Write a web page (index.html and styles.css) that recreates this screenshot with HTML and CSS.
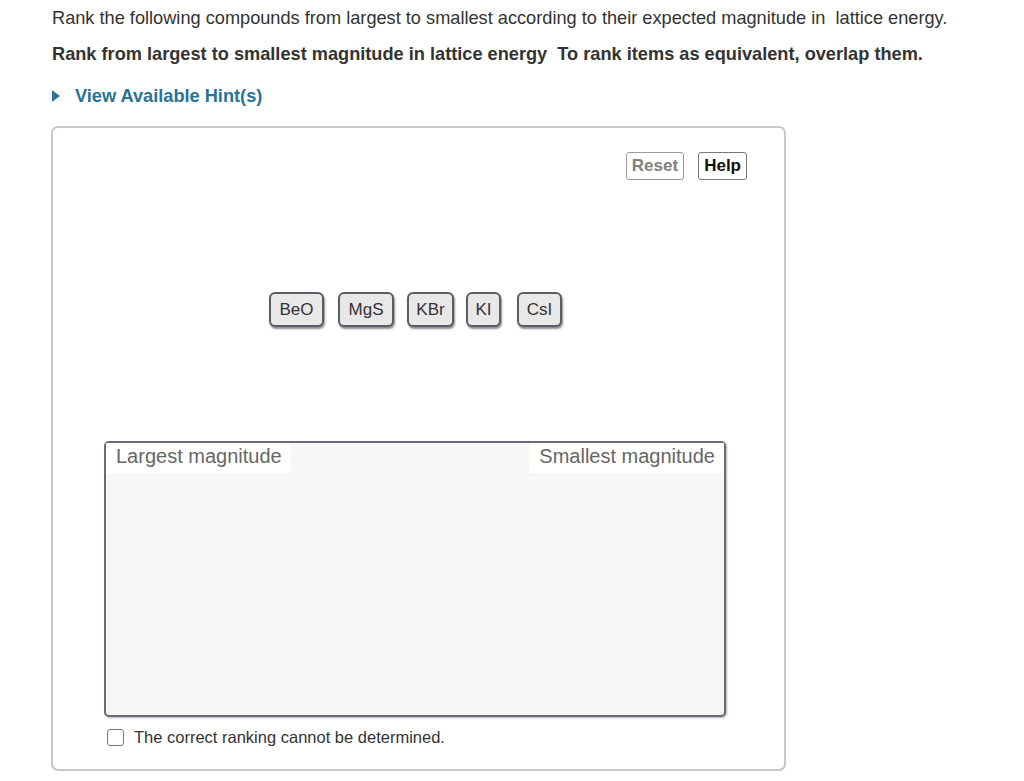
FILE: index.html
```html
<!DOCTYPE html>
<html>
<head>
<meta charset="utf-8">
<link rel="stylesheet" href="styles.css">
</head>
<body>
<div class="page">
  <p class="intro">Rank the following compounds from largest to smallest according to their expected magnitude in &nbsp;lattice energy.</p>
  <p class="instr">Rank from largest to smallest magnitude in lattice energy &nbsp;To rank items as equivalent, overlap them.</p>
  <div class="hint"><span class="tri"></span><span class="hint-text">View Available Hint(s)</span></div>
  <div class="panel">
    <div class="toolbar">
      <button class="btn reset">Reset</button>
      <button class="btn help">Help</button>
    </div>
    <div class="tiles">
      <div class="tile t-beo">BeO</div>
      <div class="tile t-mgs">MgS</div>
      <div class="tile t-kbr">KBr</div>
      <div class="tile t-ki">KI</div>
      <div class="tile t-csi">CsI</div>
    </div>
    <div class="zone">
      <div class="labels">
        <span class="lbl">Largest magnitude</span>
        <span class="lbl">Smallest magnitude</span>
      </div>
    </div>
    <label class="check"><span class="box"></span>The correct ranking cannot be determined.</label>
  </div>
</div>
</body>
</html>
```
FILE: styles.css
```css
html, body { margin: 0; padding: 0; background: #fff; }
body { font-family: "Liberation Sans", Arial, sans-serif; color: #333; }
.page { padding: 7px 0 0 52px; width: 960px; }
.intro { margin: 0; font-size: 18.2px; line-height: 22px; white-space: nowrap; }
.instr { margin: 14px 0 0; font-size: 18.2px; line-height: 22px; font-weight: bold; white-space: nowrap; }
.hint { display: flex; align-items: center; margin-top: 20px; height: 22px; }
.tri { width: 0; height: 0; border-top: 6px solid transparent; border-bottom: 6px solid transparent; border-left: 8px solid #2a7396; margin-right: 15px; }
.hint-text { color: #2a7396; font-weight: bold; font-size: 18.2px; }
.panel { margin-top: 19px; margin-left: -1px; width: 735px; height: 645px; border: 2px solid #c8c8c8; border-radius: 7px; box-sizing: border-box; }
.toolbar { display: flex; justify-content: flex-end; gap: 14px; padding: 24px 37px 0 0; }
.btn { font-family: "Liberation Sans", Arial, sans-serif; font-size: 17px; font-weight: bold; background: #fff; border: 1px solid #777; border-radius: 3px; height: 28px; padding: 0 5px; }
.reset { color: #808080; border-color: #999; }
.help { color: #111; }
.tiles { display: flex; margin: 112px 0 0 216px; }
.tile { height: 35px; box-sizing: border-box; display: flex; align-items: center; justify-content: center; background: #e8e8e8; border: 2px solid #5c5c66; border-radius: 6px; font-size: 17px; color: #333; box-shadow: 1px 2px 2px rgba(0,0,0,0.45); }
.t-beo { width: 55px; }
.t-mgs { width: 56px; margin-left: 14px; }
.t-kbr { width: 47px; margin-left: 13px; }
.t-ki { width: 35px; margin-left: 12px; }
.t-csi { width: 45px; margin-left: 16px; }
.zone { margin: 114px 0 0 51px; width: 622px; height: 276px; box-sizing: border-box; background: #f7f7f7; border: 2px solid #6a6a78; border-radius: 5px; box-shadow: 1px 1px 2px rgba(0,0,0,0.3); }
.labels { display: flex; justify-content: space-between; }
.lbl { background: #fff; font-size: 20px; color: #666; padding: 2px 9px 6px 10px; line-height: 22px; }
.check { display: flex; align-items: center; margin: 11px 0 0 54px; font-size: 16.5px; color: #333; }
.box { width: 15px; height: 15px; border: 1px solid #777; border-radius: 3px; margin-right: 10px; background: #fff; }
```
